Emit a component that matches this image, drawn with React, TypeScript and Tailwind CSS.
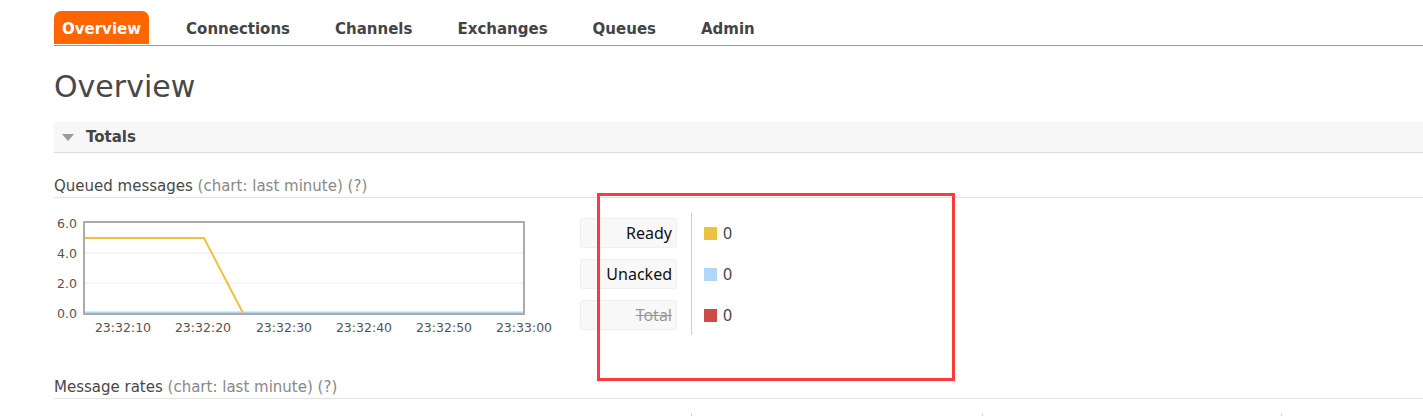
import React from "react";

const tabs = ["Overview", "Connections", "Channels", "Exchanges", "Queues", "Admin"];

const legend = [
  { label: "Ready", color: "bg-[#edc240]", value: "0" },
  { label: "Unacked", color: "bg-[#afd8f8]", value: "0" },
  { label: "Total", color: "bg-[#cb4b4b]", value: "0", disabled: true },
];

function QueuedChart() {
  const yTicks = [
    { label: "6.0", y: 16 },
    { label: "4.0", y: 46 },
    { label: "2.0", y: 76 },
    { label: "0.0", y: 106 },
  ];
  const xTicks = [
    { label: "23:32:10", x: 69 },
    { label: "23:32:20", x: 149 },
    { label: "23:32:30", x: 230 },
    { label: "23:32:40", x: 310 },
    { label: "23:32:50", x: 390 },
    { label: "23:33:00", x: 470 },
  ];
  return (
    <svg width="510" height="130" className="shrink-0 mt-[14px]" fontFamily="'DejaVu Sans', Verdana, sans-serif">
      {/* grid */}
      <line x1="30" y1="41" x2="469" y2="41" stroke="#ececec" />
      <line x1="30" y1="71" x2="469" y2="71" stroke="#ececec" />
      {/* series */}
      <polyline points="30,100.5 469,100.5" fill="none" stroke="#afd8f8" strokeWidth="2" />
      <polyline points="30,26 150,26 189,101" fill="none" stroke="#edc240" strokeWidth="2" />
      {/* frame */}
      <rect x="30" y="10" width="440" height="92" fill="none" stroke="#ababab" strokeWidth="2" />
      {yTicks.map((t) => (
        <text key={t.label} x="23" y={t.y} textAnchor="end" fontSize="12.5" fill="#545454">
          {t.label}
        </text>
      ))}
      {xTicks.map((t) => (
        <text key={t.label} x={t.x} y="120" textAnchor="middle" fontSize="12.5" fill="#545454">
          {t.label}
        </text>
      ))}
    </svg>
  );
}

export default function App() {
  return (
    <div className="relative h-[416px] overflow-hidden bg-white pl-[54px] font-['DejaVu_Sans',Verdana,sans-serif] text-[#484848]">
      {/* Top menu */}
      <nav className="flex items-end gap-[29px] border-b border-[#f0862a] pt-[11px] pb-px">
        {tabs.map((t, i) => (
          <a
            key={t}
            className={`flex h-[33px] items-center px-2 pt-[3px] text-[15px] font-bold ${
              i === 0 ? "rounded-t-[7px] bg-[#ff6600] text-white" : "text-[#444]"
            }`}
          >
            {t}
          </a>
        ))}
      </nav>

      <h1 className="mt-[21px] text-[30px] leading-[40px] font-normal text-[#484848]">Overview</h1>

      {/* Totals section */}
      <div className="mt-[15px] flex h-[31px] items-center border-b border-[#dcdcdc] bg-[#f7f7f7] pl-[8px]">
        <span className="mr-[12px] h-0 w-0 border-x-[6px] border-t-[7px] border-x-transparent border-t-[#9a9a9a]" />
        <span className="text-[15px] font-bold text-[#444]">Totals</span>
      </div>

      <h3 className="mt-[20px] h-[25px] border-b border-[#e2e2e2] pt-[2px] text-[15px] leading-[22px] text-[#484848]">
        Queued messages <span className="text-[#888]">(chart: last minute) (?)</span>
      </h3>

      <div className="flex h-[176px]">
        <QueuedChart />
        <div className="ml-[16px] mt-[15px] flex h-[122px] font-['Noto_Sans',sans-serif]">
          <div className="flex flex-col gap-[11px] pt-[5px]">
            {legend.map((l) => (
              <div
                key={l.label}
                className={`flex h-[30px] w-[97px] items-center justify-end rounded-[3px] border border-[#efefef] bg-[#f8f8f8] pr-[4px] text-[16px] ${
                  l.disabled ? "text-[#999] line-through" : "text-[#111]"
                }`}
              >
                {l.label}
              </div>
            ))}
          </div>
          <div className="ml-[14px] w-px bg-[#cfcfcf]" />
          <div className="ml-[12px] flex flex-col gap-[11px] pt-[5px]">
            {legend.map((l) => (
              <div key={l.label} className="flex h-[30px] items-center gap-[6px] text-[16px] text-[#444]">
                <span className={`h-[13px] w-[13px] ${l.color}`} />
                {l.value}
              </div>
            ))}
          </div>
        </div>
      </div>

      <h3 className="h-[25px] border-b border-[#e2e2e2] pt-[2px] text-[15px] leading-[22px] text-[#484848]">
        Message rates <span className="text-[#888]">(chart: last minute) (?)</span>
      </h3>

      <div className="mt-[15px] flex h-[10px] pl-[637px]">
        <div className="w-[291px] border-l border-[#ccc]" />
        <div className="w-[299px] border-l border-[#ccc]" />
        <div className="border-l border-[#ccc]" />
      </div>

      {/* annotation box */}
      <div className="absolute left-[597px] top-[193px] h-[188px] w-[358px] border-[3px] border-[#fb3a3a]" />
    </div>
  );
}
